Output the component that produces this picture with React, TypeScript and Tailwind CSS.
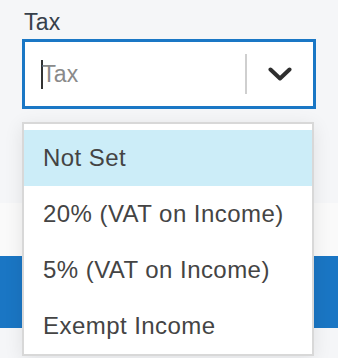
import React from "react";

const items = ["Not Set", "20% (VAT on Income)", "5% (VAT on Income)", "Exempt Income"];

export default function App() {
  return (
    <div
      className="relative w-[338px] h-[358px] overflow-hidden flex flex-col"
      style={{ fontFamily: '"Liberation Sans", Arial, sans-serif' }}
    >
      <div className="h-[203px] bg-[#f5f6f8] px-[22px] pt-[8px] flex flex-col">
        <div className="text-[23px] leading-[28px] text-[#37404b] pl-[2px] tracking-[0.2px]">Tax</div>
        <div className="mt-[3px] h-[70px] border-[3px] border-[#1a77c5] bg-white flex items-center">
          <div className="flex-1 flex items-center pl-[16px]">
            <span className="w-[2px] h-[29px] bg-[#333]"></span>
            <span className="text-[23px] text-[#8a8a8a] leading-none -ml-[1px] tracking-[0.2px]">Tax</span>
          </div>
          <div className="w-[2px] h-[40px] bg-[#cfcfcf]"></div>
          <div className="w-[66px] flex items-center justify-center">
            <svg width="24" height="15" viewBox="0 0 24 15" fill="none">
              <path d="M2.5 2.5 L12 11.5 L21.5 2.5" stroke="#2e2e2e" strokeWidth="4" strokeLinecap="round" strokeLinejoin="round" />
            </svg>
          </div>
        </div>
      </div>
      <div className="h-[53px] bg-[#fafafa]"></div>
      <div className="h-[72px] bg-[#1a76c4]"></div>
      <div className="flex-1 bg-[#f5f6f8]"></div>

      <div className="absolute top-[122px] left-[22px] w-[292px] bg-white border-2 border-[#d8d8d8] pt-[6px] shadow-[0_4px_18px_rgba(0,0,0,0.09)]">
        {items.map((t, i) => (
          <div
            key={t}
            className={
              "h-[56px] flex items-center pl-[19px] text-[24px] tracking-[0.45px] text-[#444] " +
              (i === 0 ? "bg-[#ccedf8]" : "bg-white")
            }
          >
            {t}
          </div>
        ))}
      </div>
    </div>
  );
}
